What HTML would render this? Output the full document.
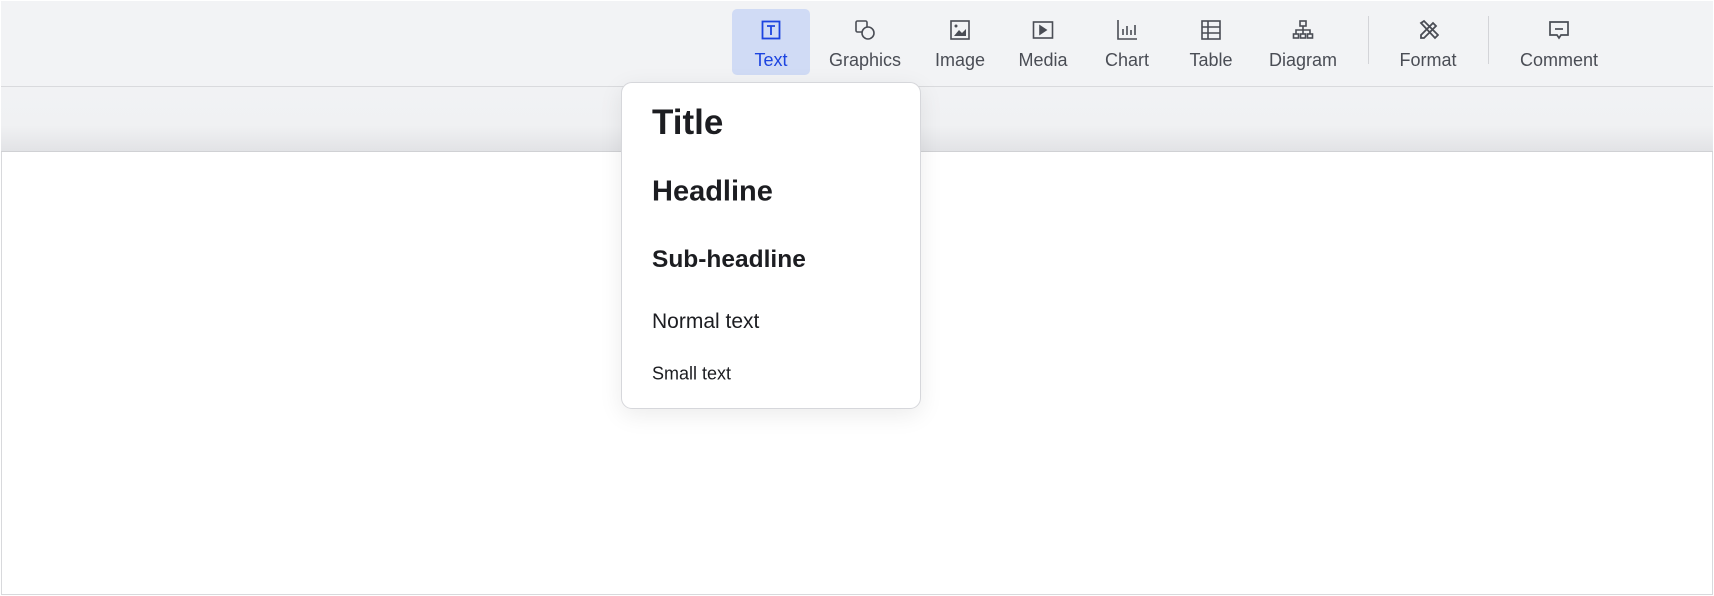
<!DOCTYPE html>
<html><head><meta charset="utf-8"><style>
*{margin:0;padding:0;box-sizing:border-box}
body{width:1714px;height:596px;background:#fff;font-family:"Liberation Sans",Arial,sans-serif;position:relative;overflow:hidden}
.frame{position:absolute;left:1px;top:1px;width:1712px;height:594px;border:1px solid #d8d9dc;background:#fff}
.tb{position:absolute;left:1px;top:1px;width:1712px;height:86px;background:#f2f3f5;border-bottom:1px solid #d9dadd}
.band{position:absolute;left:1px;top:87px;width:1712px;height:65px;background:linear-gradient(#f1f2f4,#f0f1f3 60%,#e2e3e6);border-bottom:1px solid #d0d1d4}
.btn{position:absolute;top:0;height:86px;transform:translateX(-50%);text-align:center;color:#4a4d55;font-size:18px}
.btn svg{position:absolute;left:50%;top:19px;margin-left:-11px;width:22px;height:22px}
.btn span{position:absolute;left:50%;top:50px;transform:translateX(-50%);white-space:nowrap}
.sel{position:absolute;left:732px;top:9px;width:78px;height:66px;background:#d0dbf5;border-radius:5px}
.sep{position:absolute;top:16px;width:1px;height:48px;background:#d3d4d8}
.pop{position:absolute;left:621px;top:82px;width:300px;height:327px;background:#fff;border:1px solid #d6d7db;border-radius:11px;box-shadow:0 6px 24px rgba(0,0,0,.08)}
.pop div{position:absolute;left:30px;color:#1c1d21;white-space:nowrap;transform:translateY(-50%)}
</style></head><body>
<div class="frame"></div>
<div class="tb"></div>
<div class="band"></div>
<div class="sel"></div>
<div class="btn" style="left:771px;color:#1c44e0"><svg viewBox="0 0 22 22" fill="none" stroke="#1c44e0" stroke-width="1.8"><rect x="2.5" y="2.5" width="17" height="17"/><path d="M7 7h8M11 7v9"/></svg><span>Text</span></div>
<div class="btn" style="left:865px"><svg viewBox="0 0 22 22" fill="none" stroke="#4a4d55" stroke-width="1.6"><rect x="2" y="2" width="11" height="11" rx="1.5"/><circle cx="14" cy="14" r="6" fill="#f2f3f5"/></svg><span>Graphics</span></div>
<div class="btn" style="left:960px"><svg viewBox="0 0 22 22" fill="none" stroke="#4a4d55" stroke-width="1.6"><rect x="2" y="2" width="18" height="18"/><path d="M5 17l5-6 3 3 4-4v7z" fill="#4a4d55" stroke="none"/><circle cx="7" cy="7" r="1.5" fill="#4a4d55" stroke="none"/></svg><span>Image</span></div>
<div class="btn" style="left:1043px"><svg viewBox="0 0 22 22" fill="none" stroke="#4a4d55" stroke-width="1.6"><rect x="1.5" y="3" width="19" height="16"/><path d="M8 7v8l6-4z" fill="#4a4d55"/></svg><span>Media</span></div>
<div class="btn" style="left:1127px"><svg viewBox="0 0 22 22" fill="none" stroke="#4a4d55" stroke-width="1.6"><path d="M2 1v19h19M7 10v6M11 7v9M15 11v5M19 6v10"/></svg><span>Chart</span></div>
<div class="btn" style="left:1211px"><svg viewBox="0 0 22 22" fill="none" stroke="#4a4d55" stroke-width="1.6"><rect x="2" y="2" width="18" height="18"/><path d="M2 8h18M2 14h18M8 2v18"/></svg><span>Table</span></div>
<div class="btn" style="left:1303px"><svg viewBox="0 0 22 22" fill="none" stroke="#4a4d55" stroke-width="1.6"><rect x="8" y="2" width="6" height="5"/><rect x="1.5" y="15" width="5" height="4"/><rect x="8.5" y="15" width="5" height="4"/><rect x="15.5" y="15" width="5" height="4"/><path d="M11 7v8M4 15v-4h14v4"/></svg><span>Diagram</span></div>
<div class="sep" style="left:1368px"></div>
<div class="btn" style="left:1428px"><svg viewBox="0 0 22 22" fill="none" stroke="#4a4d55" stroke-width="1.8"><path d="M4 16L16 4l3 3L7 19H4zM4 4l3-2 14 14-3 3z"/></svg><span>Format</span></div>
<div class="sep" style="left:1488px"></div>
<div class="btn" style="left:1559px"><svg viewBox="0 0 22 22" fill="none" stroke="#4a4d55" stroke-width="1.7"><path d="M2 3h18v13h-7l-2 3-2-3H2z"/><path d="M7 10h8"/></svg><span>Comment</span></div>
<div class="pop">
<div style="top:40px;font-size:35px;font-weight:bold">Title</div>
<div style="top:109px;font-size:29px;font-weight:bold">Headline</div>
<div style="top:177px;font-size:24.5px;font-weight:bold">Sub-headline</div>
<div style="top:239px;font-size:21px">Normal text</div>
<div style="top:291px;font-size:18px">Small text</div>
</div>
</body></html>
